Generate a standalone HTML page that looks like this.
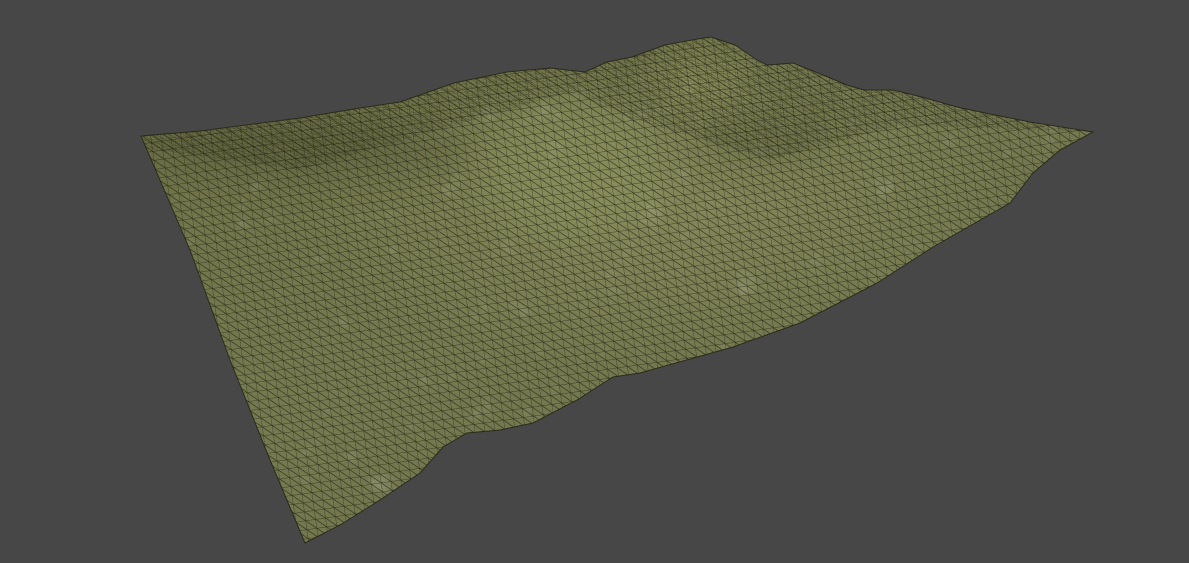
<!DOCTYPE html>
<html><head><meta charset="utf-8"><style>
html,body{margin:0;padding:0;background:#474747;width:1189px;height:563px;overflow:hidden}
</style></head><body>
<svg width="1189" height="563" viewBox="0 0 1189 563" xmlns="http://www.w3.org/2000/svg">
<defs>
<clipPath id="c"><path id="t" d="M141,136 L200,131 L300,118 L360,108 L400,102 L454,83 L507,72 L550,68 L585,72 L607,62 L632,57 L665,45 L703,38 L711,37 L735,45 L757,60 L767,65 L793,63 L828,77 L847,85 L864,90 L893,90 L922,97 L957,107 L990,114 L1030,122 L1093,132 L1060,150 L1033,173 L1010,203 L933,247 L877,283 L800,323 L733,347 L640,373 L613,377 L577,400 L533,423 L500,430 L467,433 L443,447 L420,473 L380,500 L340,525 L305,543 L270,460 L230,360 L190,250 Z"/></clipPath>
<linearGradient id="g" x1="0" y1="0" x2="1" y2="1">
<stop offset="0" stop-color="#6c7045"/><stop offset="0.5" stop-color="#767a50"/><stop offset="1" stop-color="#6c7048"/>
</linearGradient>
<radialGradient id="h" cx="0.55" cy="0.35" r="0.3">
<stop offset="0" stop-color="#9a9e68" stop-opacity="0.4"/><stop offset="1" stop-color="#9a9e68" stop-opacity="0"/>
</radialGradient>
<pattern id="p" width="10" height="9" patternUnits="userSpaceOnUse" patternTransform="rotate(-8)">
<path d="M0,0 L10,0 M0,0 L10,9 M0,0 L0,9" stroke="#15170a" stroke-width="0.65" stroke-opacity="0.8" fill="none"/>
</pattern>
<pattern id="p2" width="6" height="4" patternUnits="userSpaceOnUse" patternTransform="rotate(-5)">
<path d="M0,0 L6,0 M0,0 L6,4 M0,0 L0,4" stroke="#15170a" stroke-width="0.5" stroke-opacity="0.5" fill="none"/>
</pattern>
<filter id="n"><feTurbulence baseFrequency="0.03" numOctaves="2" seed="3"/><feColorMatrix values="0 0 0 0 0.55  0 0 0 0 0.56  0 0 0 0 0.45  0 0 0 1.2 -0.55"/></filter>
<filter id="b"><feGaussianBlur stdDeviation="18"/></filter>
</defs>
<g clip-path="url(#c)">
<rect width="1189" height="563" fill="url(#g)"/>
<rect width="1189" height="563" filter="url(#n)" opacity="0.6"/>
<rect width="1189" height="563" fill="url(#h)"/>
<g filter="url(#b)">
<ellipse cx="570" cy="170" rx="90" ry="70" fill="#8f9460" opacity="0.45"/>
<ellipse cx="705" cy="80" rx="50" ry="30" fill="#9a9f62" opacity="0.4"/>
<ellipse cx="300" cy="150" rx="170" ry="25" fill="#4e5230" opacity="0.45"/>
<ellipse cx="760" cy="140" rx="70" ry="18" fill="#4e5230" opacity="0.35"/>
</g>
<rect width="1189" height="563" fill="url(#p)"/>
<path d="M141,136 L454,83 L550,68 L711,37 L893,90 L1093,132 L900,125 L770,160 L630,118 L570,92 L480,118 L300,170 L141,148 Z" fill="url(#p2)" filter="url(#b2)"/>
</g>
<use href="#t" fill="none" stroke="#2a2c1a" stroke-width="1"/>
</svg>
</body></html>
